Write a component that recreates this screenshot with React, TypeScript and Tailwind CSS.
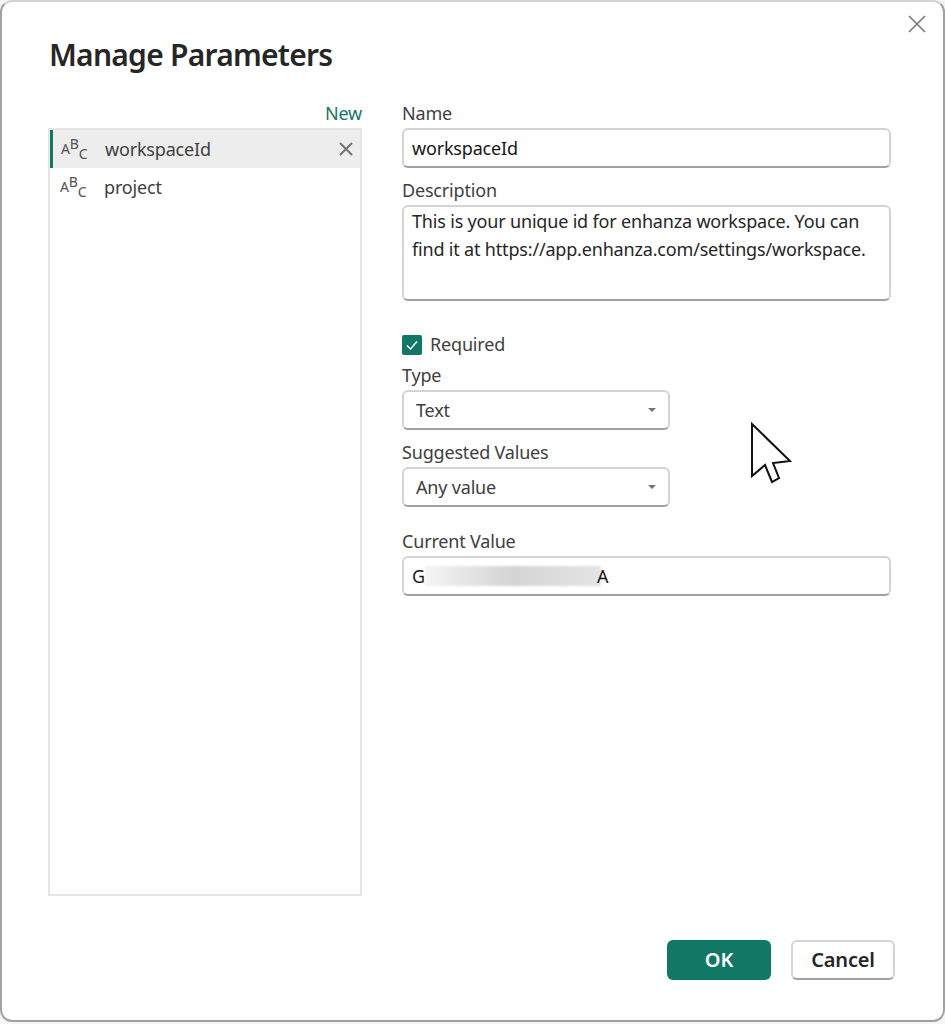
const Abc = () => (
  <span className="flex h-6 w-6 justify-between text-sm leading-none text-neutral-600">
    <span className="self-center">A</span>
    <span className="self-start">B</span>
    <span className="self-end">C</span>
  </span>
);

const Caret = () => <span className="h-0 w-0 border-x-4 border-t-4 border-x-transparent border-t-neutral-500" />;

const Label = ({ children, className = "" }: { children: string; className?: string }) => (
  <div className={`mb-px leading-7 text-neutral-700 ${className}`}>{children}</div>
);

const inputBorder = "rounded-md border-2 border-neutral-300 border-b-neutral-400";

const Select = ({ value }: { value: string }) => (
  <div className={`flex h-10 w-67 items-center justify-between pr-3 pl-3 text-neutral-700 ${inputBorder}`}>
    {value}
    <Caret />
  </div>
);

export default function App() {
  return (
    <div className="h-[1024px] w-[945px] bg-neutral-100 pb-0.5 font-['Noto_Sans',sans-serif] text-lg tracking-[-0.01em]">
      <div className="relative flex h-full flex-col rounded-xl border-2 border-neutral-400 border-t-neutral-300 bg-white">
        <svg className="absolute top-3 right-4 h-5 w-5 text-neutral-500" viewBox="0 0 20 20" stroke="currentColor" strokeWidth="1.5">
          <path d="M2 2 18 18M18 2 2 18" />
        </svg>

        <h1 className="mt-px pt-8 pl-[47px] text-3xl leading-10 font-semibold tracking-tight text-neutral-800">Manage Parameters</h1>

        <div className="mt-6 flex min-h-0 flex-1 gap-10 pl-[46px]">
          <div className="flex w-[314px] flex-col">
            <div className="mb-px text-right leading-7 text-[#117865]">New</div>
            <ul className="flex-1 border-2 border-neutral-200">
              <li className="flex h-[38px] items-center border-l-3 border-[#117865] bg-neutral-200/70 pr-1.5 pl-2 text-neutral-700">
                <Abc />
                <span className="ml-5 flex-1">workspaceId</span>
                <svg className="h-4 w-4 text-neutral-500" viewBox="0 0 16 16" stroke="currentColor" strokeWidth="2">
                  <path d="M2 2 14 14M14 2 2 14" />
                </svg>
              </li>
              <li className="flex h-[38px] items-center pr-2 pl-2.5 text-neutral-700">
                <Abc />
                <span className="ml-5">project</span>
              </li>
            </ul>
          </div>

          <div className="relative w-[489px]">
            <Label>Name</Label>
            <div className={`flex h-10 items-center px-2 text-neutral-900 ${inputBorder}`}>workspaceId</div>

            <Label className="mt-2">Description</Label>
            <div className={`h-24 px-2 text-neutral-800 ${inputBorder}`}>
              This is your unique id for enhanza workspace. You can find it at https://app.enhanza.com/settings/workspace.
            </div>

            <div className="mt-7 flex h-8 items-center gap-2 text-neutral-700">
              <span className="flex h-5 w-5 items-center justify-center rounded-xs bg-[#117865]">
                <svg className="h-4 w-4 text-white" viewBox="0 0 16 16" fill="none" stroke="currentColor" strokeWidth="1.5">
                  <path d="M3 8.5 6.5 12 13 4.5" />
                </svg>
              </span>
              <span className="mb-0.5">Required</span>
            </div>

            <Label>Type</Label>
            <Select value="Text" />

            <Label className="mt-2">Suggested Values</Label>
            <Select value="Any value" />

            <Label className="mt-5">Current Value</Label>
            <div className={`flex h-10 items-center px-2 text-neutral-900 ${inputBorder}`}>
              G
              <span className="-mr-1 h-5 w-44 bg-linear-to-r from-neutral-100 via-neutral-300 to-neutral-200 blur-[1px]" />
              <span className="relative">A</span>
            </div>

            <svg className="absolute top-[322px] left-[348px] h-16 w-11" viewBox="0 0 44 64" fill="white" stroke="#111" strokeWidth="2">
              <path d="M2 3 40 40 23 42 29 57 22 61 15 44 2 55Z" />
            </svg>
          </div>
        </div>

        <div className="mt-11 flex justify-end gap-5 pr-12 pb-10 text-xl font-semibold">
          <button className="h-10 w-26 rounded-md bg-[#117865] text-white">OK</button>
          <button className={`h-10 w-26 text-neutral-800 ${inputBorder}`}>Cancel</button>
        </div>
      </div>
    </div>
  );
}
